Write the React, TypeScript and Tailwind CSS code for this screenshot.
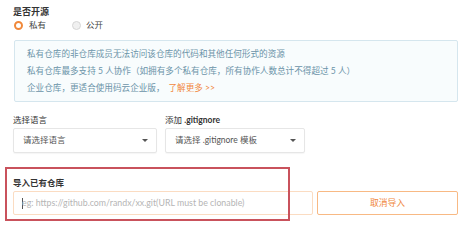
import React from "react";

const font = { fontFamily: 'Lato, "Noto Sans CJK SC", sans-serif' };

function Caret() {
  return (
    <span className="inline-block w-0 h-0 border-l-[3px] border-r-[3px] border-t-[3px] border-l-transparent border-r-transparent border-t-[#555]" />
  );
}

export default function App() {
  return (
    <div className="relative w-[474px] h-[225px] bg-white overflow-hidden" style={font}>
      <div className="pl-[13px] w-[458px] flex flex-col">
        <div className="mt-[5px] h-[14px] leading-[14px] text-[9px] font-bold text-[#333]">是否开源</div>
        <div className="h-[13px] flex items-center text-[8.5px] text-[#444]">
          <span className="inline-block w-[9px] h-[9px] rounded-full border-[2.5px] border-[#f0883a] bg-white ml-[1px]" />
          <span className="ml-[6px]">私有</span>
          <span className="inline-block w-[9px] h-[9px] rounded-full border border-[#d6d6d6] bg-[#f0f0f0] ml-[26px]" />
          <span className="ml-[5px]">公开</span>
        </div>
        <div className="mt-[8px] ml-[1px] w-[444px] border border-[#d5e6ee] bg-[#f8fcfd] rounded-[2px] pl-[12px] pt-[5px] pb-[4px] text-[8.6px] leading-[17px] text-[#6a93a8]">
          <div>私有仓库的非仓库成员无法访问该仓库的代码和其他任何形式的资源</div>
          <div>私有仓库最多支持 5 人协作（如拥有多个私有仓库，所有协作人数总计不得超过 5 人）</div>
          <div>
            企业仓库，更适合使用码云企业版，
            <span className="ml-[4px] text-[#f2883e]">了解更多 &gt;&gt;</span>
          </div>
        </div>
        <div className="mt-[10px] flex gap-[8px]">
          <div className="w-[144px] flex flex-col">
            <div className="h-[16px] leading-[16px] text-[8.5px] text-[#333]">选择语言</div>
            <div className="h-[25px] border border-[#e6e6e6] rounded-[2px] shadow-[0_1px_1px_rgba(0,0,0,0.04)] flex items-center justify-between pl-[9px] pr-[8px] text-[8.5px] text-[#555]">
              <span>请选择语言</span>
              <Caret />
            </div>
          </div>
          <div className="w-[140px] flex flex-col">
            <div className="h-[16px] leading-[16px] text-[8.5px] text-[#333]">
              添加 <span className="font-bold">.gitignore</span>
            </div>
            <div className="h-[25px] border border-[#e6e6e6] rounded-[2px] shadow-[0_1px_1px_rgba(0,0,0,0.04)] flex items-center justify-between pl-[9px] pr-[8px] text-[8.5px] text-[#555]">
              <span>请选择 .gitignore 模板</span>
              <Caret />
            </div>
          </div>
        </div>
        <div className="mt-[22px] h-[16px] leading-[16px] text-[8.5px] font-bold text-[#333]">导入已有仓库</div>
        <div className="flex gap-[4px]">
          <div className="w-[300px] h-[24px] border border-[#fbdcc2] rounded-[2px] flex items-center pl-[8px] text-[8.8px] text-[#b5b5b5]">
            <span className="inline-block w-px h-[11px] bg-[#555] mr-[-1px]" />
            <span>eg: https://github.com/randx/xx.git(URL must be clonable)</span>
          </div>
          <div className="w-[141px] h-[24px] border border-[#f8b984] rounded-[2px] flex items-center justify-center text-[8.8px] text-[#f0883e]">
            取消导入
          </div>
        </div>
      </div>
      <div className="absolute left-[5px] top-[167px] w-[285px] h-[54px] border-2 border-[#c9525c]" />
    </div>
  );
}
